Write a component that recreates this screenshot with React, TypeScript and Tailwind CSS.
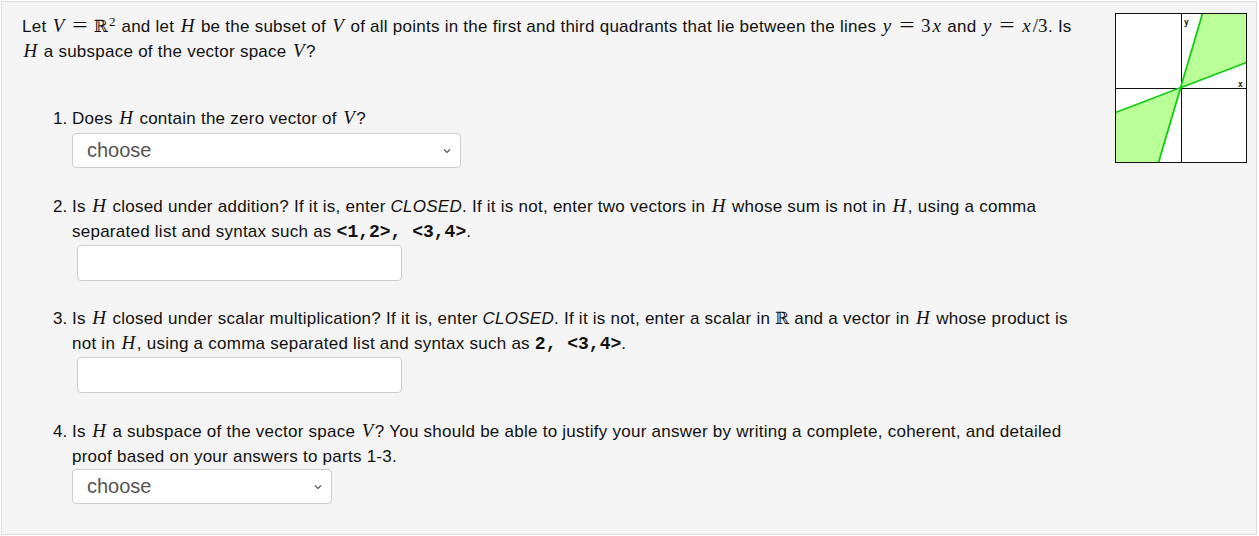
import React from "react";

const M = ({ children }: { children: React.ReactNode }) => (
  <span className="font-['Liberation_Serif',serif] italic text-[19px] leading-none px-[1.5px] tracking-normal">{children}</span>
);
const N = ({ children }: { children: React.ReactNode }) => (
  <span className="font-['Liberation_Serif',serif] text-[19px] leading-none tracking-normal px-[0.5px]">{children}</span>
);
const Eq = () => (
  <span className="inline-block scale-x-[1.3] font-['Liberation_Serif',serif] text-[21px] leading-none mx-[8px] tracking-normal">=</span>
);
const RR = () => (
  <span className="font-['DejaVu_Serif',serif] text-[17px] leading-none tracking-normal">ℝ</span>
);
const Code = ({ children }: { children: React.ReactNode }) => (
  <span className="font-['Liberation_Mono',monospace] font-bold text-[18px] leading-none whitespace-pre tracking-normal">{children}</span>
);

const Chevron = () => (
  <svg width="8" height="5" viewBox="0 0 8 5" className="absolute right-[9px] top-1/2 -translate-y-1/2">
    <path d="M1 1 L4 4 L7 1" fill="none" stroke="#555" strokeWidth="1.2" />
  </svg>
);

const Select = ({ w }: { w: string }) => (
  <div className={`relative ${w} h-[35px] bg-white border border-[#ccc] rounded-[4px] flex items-center pl-[14px] text-[20px] tracking-normal text-[#555]`}>
    choose
    <Chevron />
  </div>
);

const Input = () => (
  <div className="ml-[5px] w-[325px] h-[36px] bg-white border border-[#ccc] rounded-[4px]" />
);

const Graph = () => (
  <svg width="132" height="150" viewBox="0 0 132 150">
    <rect x="0.5" y="0.5" width="131" height="149" fill="white" />
    <polygon points="66.5,75.5 87.5,0.5 131.5,0.5 131.5,49.5" fill="#bbff99" />
    <polygon points="66.5,75.5 0.5,99.5 0.5,149.5 43.5,149.5" fill="#bbff99" />
    <line x1="66.5" y1="0.5" x2="66.5" y2="149.5" stroke="#111" strokeWidth="1" />
    <line x1="0.5" y1="75.5" x2="131.5" y2="75.5" stroke="#111" strokeWidth="1" />
    <line x1="87.5" y1="0.5" x2="43.5" y2="149.5" stroke="#11cc11" strokeWidth="1.8" />
    <line x1="0.5" y1="99.5" x2="131.5" y2="49.5" stroke="#11cc11" strokeWidth="1.8" />
    <rect x="0.5" y="0.5" width="131" height="149" fill="none" stroke="#111" strokeWidth="1" />
    <text x="69" y="12" fontSize="8" fontWeight="bold" fontFamily="DejaVu Sans Mono, monospace" fill="#222">y</text>
    <text x="123" y="74" fontSize="8" fontWeight="bold" fontFamily="DejaVu Sans Mono, monospace" fill="#222">x</text>
  </svg>
);

const Item = ({ n, children }: { n: string; children: React.ReactNode }) => (
  <div className="flex">
    <div className="w-[19px] shrink-0 tracking-normal">{n}</div>
    <div>{children}</div>
  </div>
);

export default function App() {
  return (
    <div className="w-[1259px] h-[536px] bg-white font-['Liberation_Sans',Arial,sans-serif] text-[17px] tracking-[0.25px] text-[#111] overflow-hidden">
      <div className="ml-[1px] mt-[1px] w-[1256px] h-[534px] border border-[#dcdcdc] bg-[#f4f4f4] flex">
        <div className="flex-1 pl-[20px] pt-[12px] leading-[25px] whitespace-nowrap">
          <div>
            Let <M>V</M><Eq /><RR /><sup className="font-['Liberation_Serif',serif] text-[13px] tracking-normal ml-[1px] mr-[1px]">2</sup> and let <M>H</M> be the subset of <M>V</M> of all points in the first and third quadrants that lie between the lines <M>y</M><Eq /><N>3</N><M>x</M> and <M>y</M><Eq /><M>x</M><N>/3</N>. Is
            <br />
            <M>H</M> a subspace of the vector space <M>V</M>?
          </div>
          <div className="ml-[31px] mt-[42px]">
            <Item n="1.">
              <div>Does <M>H</M> contain the zero vector of <M>V</M>?</div>
              <div className="mt-[2px]"><Select w="w-[389px]" /></div>
            </Item>
            <div className="mt-[26px]">
              <Item n="2.">
                <div>
                  Is <M>H</M> closed under addition? If it is, enter <i>CLOSED</i>. If it is not, enter two vectors in <M>H</M> whose sum is not in <M>H</M>, using a comma
                  <br />
                  separated list and syntax such as <Code>{"<1,2>, <3,4>"}</Code>.
                </div>
                <div className="mt-[1px]"><Input /></div>
              </Item>
            </div>
            <div className="mt-[25px]">
              <Item n="3.">
                <div>
                  Is <M>H</M> closed under scalar multiplication? If it is, enter <i>CLOSED</i>. If it is not, enter a scalar in <RR /> and a vector in <M>H</M> whose product is
                  <br />
                  not in <M>H</M>, using a comma separated list and syntax such as <Code>{"2, <3,4>"}</Code>.
                </div>
                <div className="mt-[1px]"><Input /></div>
              </Item>
            </div>
            <div className="mt-[26px]">
              <Item n="4.">
                <div>
                  Is <M>H</M> a subspace of the vector space <M>V</M>? You should be able to justify your answer by writing a complete, coherent, and detailed
                  <br />
                  proof based on your answers to parts 1-3.
                </div>
                <div><Select w="w-[260px]" /></div>
              </Item>
            </div>
          </div>
        </div>
        <div className="shrink-0 mt-[11px] mr-[9px]">
          <Graph />
        </div>
      </div>
    </div>
  );
}
